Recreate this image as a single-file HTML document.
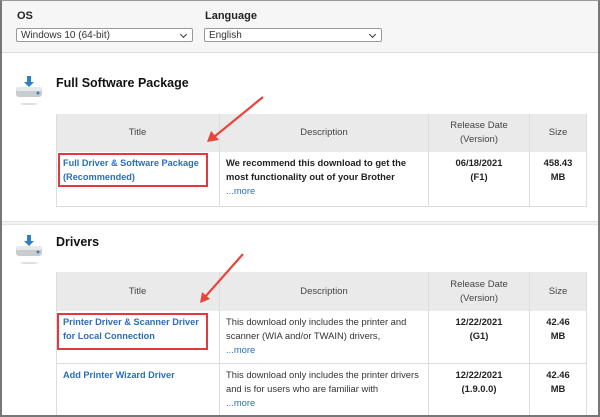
<!DOCTYPE html>
<html><head><style>
*{margin:0;padding:0;box-sizing:border-box}
body{width:600px;height:417px;overflow:hidden;font-family:"Liberation Sans",Arial,sans-serif;background:#fff;position:relative;color:#222}
.frame{position:absolute;left:0;top:0;width:600px;height:417px;border:2px solid #777;border-top:1px solid #999}
.a{position:absolute}
.top{left:2px;top:1px;width:596px;height:52px;background:#f6f6f6;border-bottom:1px solid #ddd}
.lbl{font-size:11px;font-weight:bold}
.sel{height:14px;border:1px solid #999;border-radius:2px;background:#fff;font-size:10px;padding-left:4px;line-height:13px;color:#333}
.sel:after{content:"";position:absolute;right:6px;top:3px;width:4px;height:4px;border-right:1.5px solid #333;border-bottom:1.5px solid #333;transform:rotate(45deg)}
.gap{left:2px;width:596px;background:#f3f3f3;border-top:1px solid #e4e4e4;border-bottom:1px solid #e4e4e4}
h2{position:absolute;font-size:12.5px;font-weight:bold;color:#111}
.th{background:#eaeaea;font-size:9.5px;color:#444;text-align:center;display:flex;align-items:center;justify-content:center;line-height:14px}
.cell{font-size:9.4px;line-height:14px;white-space:nowrap}
.vl{width:1px;background:#ddd}
.hl{height:1px;background:#ddd}
.link{color:#2a6ebb;font-weight:bold;font-size:9.2px}
.more{color:#2a6ebb;font-size:9.4px}
.b{font-weight:bold}
.c{text-align:center}
.red{border:2px solid #e0393e}
</style></head><body>
<div class="a top"></div>
<div class="a lbl" style="left:17px;top:10px">OS</div>
<div class="a lbl" style="left:205px;top:10px">Language</div>
<div class="a sel" style="left:16px;top:28px;width:177px">Windows 10 (64-bit)</div>
<div class="a sel" style="left:204px;top:28px;width:178px">English</div>

<svg class="a" style="left:14px;top:74px" width="32" height="34" viewBox="0 0 32 34"><rect x="2" y="13" width="26" height="10" rx="3" fill="#c8ccd0"/><rect x="2" y="13" width="26" height="4" rx="2" fill="#e6e8ea"/><circle cx="24" cy="19" r="1.5" fill="#3b7dc4"/><path d="M13 2h4v6h3l-5 5-5-5h3z" fill="#2f7fc6"/><ellipse cx="15" cy="30" rx="9" ry="1" fill="#ddd"/></svg>
<h2 style="left:56px;top:76px">Full Software Package</h2>

<div class="a th" style="left:56px;top:114px;width:163px;height:38px">Title</div>
<div class="a th" style="left:220px;top:114px;width:208px;height:38px">Description</div>
<div class="a th" style="left:429px;top:114px;width:100px;height:38px">Release Date<br>(Version)</div>
<div class="a th" style="left:530px;top:114px;width:56px;height:38px">Size</div>
<div class="a vl" style="left:56px;top:114px;height:92px"></div>
<div class="a vl" style="left:219px;top:114px;height:92px"></div>
<div class="a vl" style="left:428px;top:114px;height:92px"></div>
<div class="a vl" style="left:529px;top:114px;height:92px"></div>
<div class="a vl" style="left:586px;top:114px;height:92px"></div>
<div class="a hl" style="left:56px;top:206px;width:531px"></div>
<div class="a cell link" style="left:63px;top:156px">Full Driver &amp; Software Package<br>(Recommended)</div>
<div class="a red" style="left:58px;top:153px;width:150px;height:34px"></div>
<div class="a cell b" style="left:226px;top:156px">We recommend this download to get the<br>most functionality out of your Brother</div>
<div class="a more" style="left:226px;top:185px">...more</div>
<div class="a cell b c" style="left:429px;top:156px;width:100px">06/18/2021<br>(F1)</div>
<div class="a cell b c" style="left:530px;top:156px;width:56px">458.43<br>MB</div>

<div class="a gap" style="top:221px;height:4px"></div>

<svg class="a" style="left:14px;top:233px" width="32" height="34" viewBox="0 0 32 34"><rect x="2" y="13" width="26" height="10" rx="3" fill="#c8ccd0"/><rect x="2" y="13" width="26" height="4" rx="2" fill="#e6e8ea"/><circle cx="24" cy="19" r="1.5" fill="#3b7dc4"/><path d="M13 2h4v6h3l-5 5-5-5h3z" fill="#2f7fc6"/><ellipse cx="15" cy="30" rx="9" ry="1" fill="#ddd"/></svg>
<h2 style="left:56px;top:235px">Drivers</h2>

<div class="a th" style="left:56px;top:272px;width:163px;height:39px">Title</div>
<div class="a th" style="left:220px;top:272px;width:208px;height:39px">Description</div>
<div class="a th" style="left:429px;top:272px;width:100px;height:39px">Release Date<br>(Version)</div>
<div class="a th" style="left:530px;top:272px;width:56px;height:39px">Size</div>
<div class="a vl" style="left:56px;top:272px;height:145px"></div>
<div class="a vl" style="left:219px;top:272px;height:145px"></div>
<div class="a vl" style="left:428px;top:272px;height:145px"></div>
<div class="a vl" style="left:529px;top:272px;height:145px"></div>
<div class="a vl" style="left:586px;top:272px;height:145px"></div>
<div class="a hl" style="left:56px;top:363px;width:531px"></div>
<div class="a cell link" style="left:63px;top:315px">Printer Driver &amp; Scanner Driver<br>for Local Connection</div>
<div class="a red" style="left:57px;top:313px;width:151px;height:37px"></div>
<div class="a cell" style="left:226px;top:315px;color:#333">This download only includes the printer and<br>scanner (WIA and/or TWAIN) drivers,</div>
<div class="a more" style="left:226px;top:344px">...more</div>
<div class="a cell b c" style="left:429px;top:315px;width:100px">12/22/2021<br>(G1)</div>
<div class="a cell b c" style="left:530px;top:315px;width:56px">42.46<br>MB</div>
<div class="a cell link" style="left:63px;top:368px">Add Printer Wizard Driver</div>
<div class="a cell" style="left:226px;top:368px;color:#333">This download only includes the printer drivers<br>and is for users who are familiar with</div>
<div class="a more" style="left:226px;top:397px">...more</div>
<div class="a cell b c" style="left:429px;top:368px;width:100px">12/22/2021<br>(1.9.0.0)</div>
<div class="a cell b c" style="left:530px;top:368px;width:56px">42.46<br>MB</div>

<svg class="a" style="left:0;top:0" width="600" height="417">
<g stroke="#e8453c" stroke-width="2.2" fill="#e8453c">
<line x1="263" y1="97" x2="214" y2="137"/>
<polygon points="207,142 211,131 219,140" stroke="none"/>
<line x1="243" y1="254" x2="205" y2="297"/>
<polygon points="200,303 202,292 210,299" stroke="none"/>
</g></svg>
<div class="frame"></div>
</body></html>
